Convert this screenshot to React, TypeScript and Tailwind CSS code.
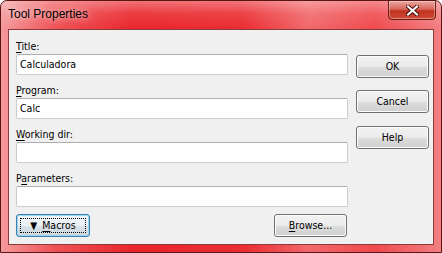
import React from 'react';

const uiFont = { fontFamily: "Tahoma, 'DejaVu Sans Condensed', 'Liberation Sans', sans-serif" };

const Field = ({ label, hotkey, value }: { label: string; hotkey: number; value?: string }) => (
  <div className="flex flex-col">
    <div className="h-[13px] text-[10.5px] leading-[13px] text-black">
      {label.slice(0, hotkey)}
      <span className="underline underline-offset-[2px]">{label[hotkey]}</span>
      {label.slice(hotkey + 1)}
    </div>
    <div className="mt-[1px] flex h-[21px] items-center rounded-[2px] border border-[#c9ccd2] border-t-[#abadb3] bg-white pl-[3px] text-[10.5px] text-black">
      {value}
    </div>
  </div>
);

const WinButton = ({
  children,
  focused,
  className = '',
}: {
  children: React.ReactNode;
  focused?: boolean;
  className?: string;
}) => (
  <div
    className={`relative flex h-[23px] w-[73px] items-center justify-center rounded-[3px] border text-[10.5px] text-black ${
      focused
        ? 'border-[#3c7fb1] bg-[linear-gradient(#f2f7fa_0%,#e9eff3_50%,#d9e2e8_51%,#ccd6dd_100%)] shadow-[inset_0_0_0_1px_#9fd5f1]'
        : 'border-[#707070] bg-[linear-gradient(#f2f2f2_0%,#ebebeb_50%,#dddddd_51%,#cfcfcf_100%)] shadow-[inset_0_0_0_1px_#fcfcfc]'
    } ${className}`}
  >
    {focused && <div className="absolute inset-[3px] border border-dotted border-black" />}
    <span className="relative flex items-center">{children}</span>
  </div>
);

export default function App() {
  return (
    <div
      className="flex h-[253px] w-[442px] flex-col overflow-hidden rounded-t-[7px] border border-[#5b1414] bg-[linear-gradient(90deg,#f49a9c_0%,#ee5357_12%,#e8262c_30%,#ea2d32_55%,#f1686b_70%,#ef4a4e_85%,#f17f82_100%)]"
      style={uiFont}
    >
      {/* title bar */}
      <div className="flex h-[28px] shrink-0 items-start bg-[linear-gradient(180deg,rgba(255,255,255,0.35)_0%,rgba(255,255,255,0.1)_45%,rgba(255,255,255,0)_100%)]">
        <div
          className="pl-[7px] pt-[6px] text-[12px] leading-[15px] text-black [text-shadow:0_0_6px_rgba(255,255,255,0.9)]"
          style={{ fontFamily: "'Segoe UI', 'Liberation Sans', sans-serif" }}
        >
          Tool Properties
        </div>
        <div className="ml-auto mr-[5px] mt-[-1px] flex h-[20px] w-[48px] items-center justify-center rounded-b-[4px] border border-[#6b1a14] bg-[linear-gradient(180deg,#e9a69f_0%,#d8685c_45%,#c0321f_55%,#cf4a36_100%)] shadow-[inset_0_0_0_1px_rgba(255,255,255,0.35)]">
          <svg width="13" height="11" viewBox="0 0 13 11">
            <path d="M2 1.5 L11 9.5 M11 1.5 L2 9.5" stroke="#4a1410" strokeWidth="4" strokeLinecap="square" />
            <path d="M2 1.5 L11 9.5 M11 1.5 L2 9.5" stroke="#ffffff" strokeWidth="2" strokeLinecap="square" />
          </svg>
        </div>
      </div>

      {/* client area */}
      <div className="mx-[7px] flex h-[216px] shrink-0 border border-[#8c3a3a] bg-[#f0f0f0] pl-[7px]">
        <div className="flex w-[332px] flex-col pt-[10px]">
          <div className="flex flex-col gap-[9px]">
            <Field label="Title:" hotkey={0} value="Calculadora" />
            <Field label="Program:" hotkey={0} value="Calc" />
            <Field label="Working dir:" hotkey={0} />
            <Field label="Parameters:" hotkey={1} />
          </div>
          <div className="mt-[7px] flex justify-between pr-[1px]">
            <WinButton focused className="w-[74px]">
              <span className="mr-[5px] text-[10px] leading-none">▼</span>
              <span>
                <span className="underline underline-offset-[2px]">M</span>acros
              </span>
            </WinButton>
            <WinButton>
              <span>
                <span className="underline underline-offset-[2px]">B</span>rowse...
              </span>
            </WinButton>
          </div>
        </div>
        <div className="ml-[8px] flex flex-col pt-[25px]">
          <WinButton>OK</WinButton>
          <WinButton className="mt-[12px]">Cancel</WinButton>
          <WinButton className="mt-[13px]">Help</WinButton>
        </div>
      </div>
    </div>
  );
}
